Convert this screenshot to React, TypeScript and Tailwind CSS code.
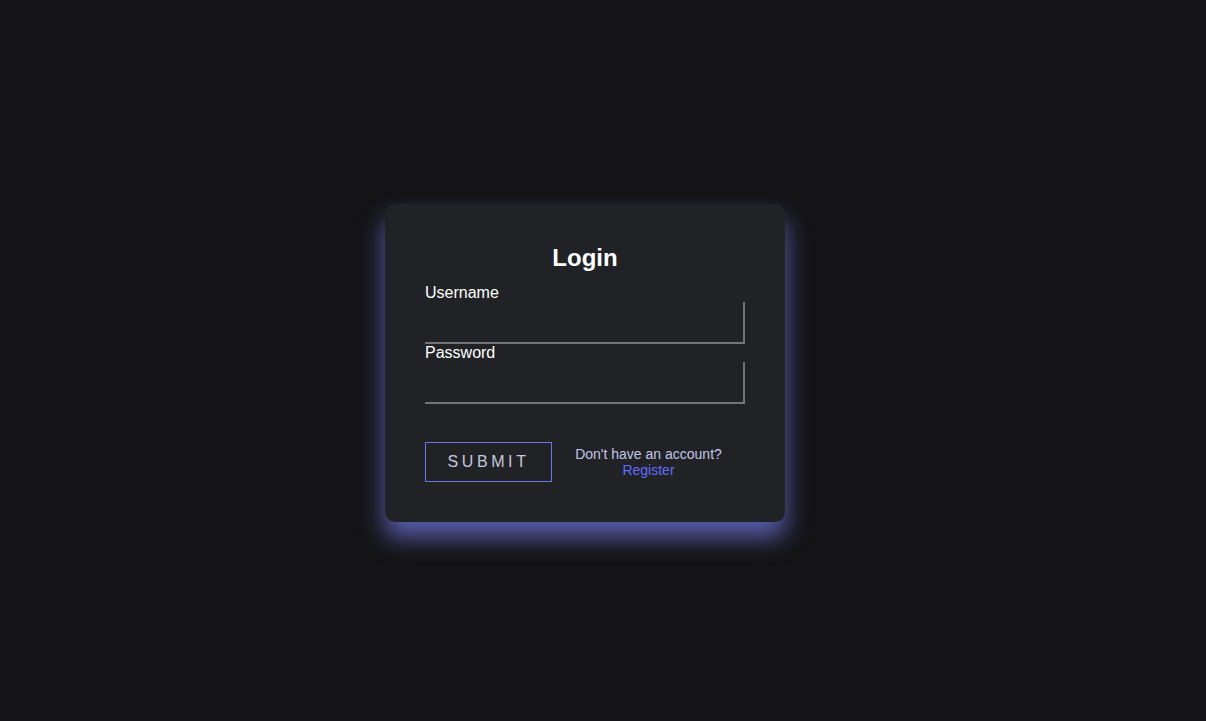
export default function App() {
  return (
    <div className="min-h-screen bg-[#141416] flex items-center justify-center pr-[36px] pt-[5px] font-['Liberation_Sans',Arial,sans-serif]">
      <div className="w-[400px] h-[318px] rounded-[10px] bg-[#212226] p-10 shadow-[0_15px_25px_rgba(128,134,255,0.65)]">
        <h2 className="text-white text-[24px] leading-[27.6px] font-bold text-center mb-[12px]">Login</h2>

        <label className="block text-white text-[16px] leading-[18.4px]">Username</label>
        <input
          type="text"
          className="block w-full h-[42px] bg-transparent text-white outline-none border-r-2 border-b-2 border-[#757575]"
        />

        <label className="block text-white text-[16px] leading-[18.4px]">Password</label>
        <input
          type="password"
          className="block w-full h-[42px] bg-transparent text-white outline-none border-r-2 border-b-2 border-[#757575]"
        />

        <div className="flex items-center mt-[38px]">
          <button className="h-10 w-[127px] border border-solid border-[#6f74e6] text-[#c5c8dc] text-[16px] tracking-[3.6px]">
            SUBMIT
          </button>
          <div className="flex-1 text-center text-[14px] leading-[16px]">
            <p className="text-[#c3c7e6]">Don&apos;t have an account?</p>
            <a className="text-[#646cff] cursor-pointer">Register</a>
          </div>
        </div>
      </div>
    </div>
  )
}
